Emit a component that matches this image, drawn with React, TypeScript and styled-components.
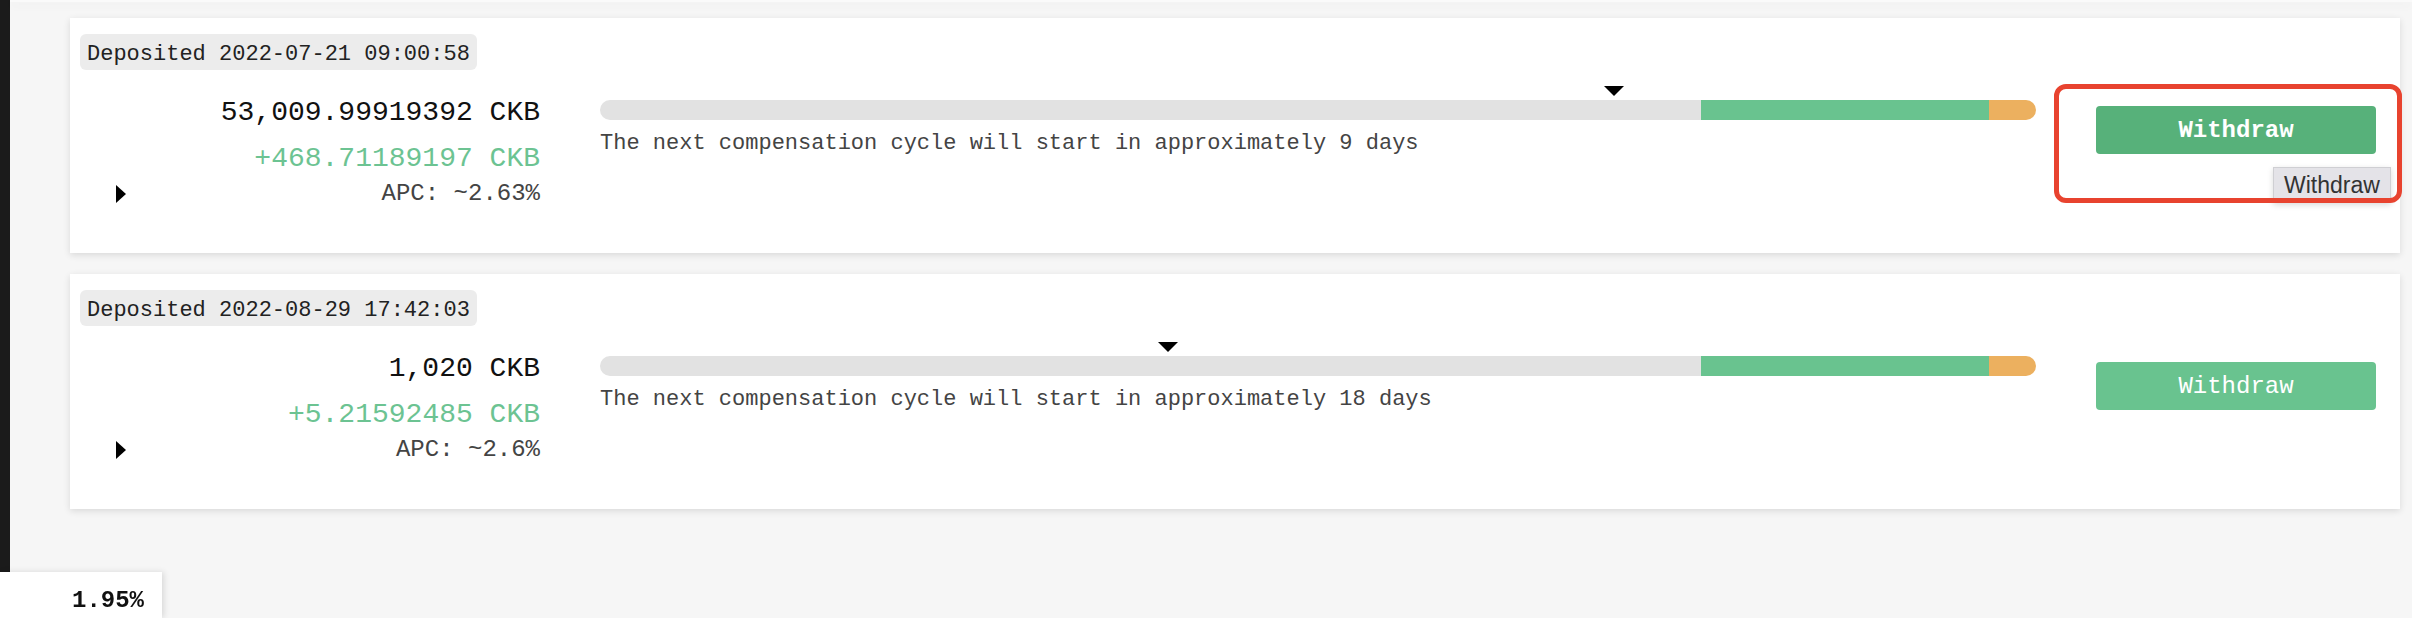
import React from 'react';
import styled, { createGlobalStyle } from 'styled-components';

const GlobalStyle = createGlobalStyle`
  html, body {
    margin: 0;
    padding: 0;
    background: #f6f6f6;
  }
  body {
    font-family: "Liberation Mono", "DejaVu Sans Mono", monospace;
  }
`;

const Page = styled.div`
  display: flex;
  height: 618px;
  overflow: hidden;
`;

const Sidebar = styled.div`
  width: 10px;
  flex-shrink: 0;
  background: #1b1b1b;
`;

const Main = styled.div`
  flex: 1;
  display: flex;
  flex-direction: column;
  gap: 21px;
  padding: 0 12px 0 60px;
  background: #f6f6f6;
`;

const PrevCardEdge = styled.div`
  height: 2px;
  margin: 0 -12px -5px -60px;
  background: #fafafa;
  box-shadow: 0 3px 10px rgba(0, 0, 0, 0.07);
`;

const Card = styled.div`
  position: relative;
  background: #fff;
  padding: 16px 24px 45px 10px;
  box-shadow: 0 2px 7px rgba(0, 0, 0, 0.12);
`;

const DateTag = styled.div`
  display: inline-block;
  height: 36px;
  padding: 0 7px;
  border-radius: 6px;
  background: #ececec;
  color: #222;
  font-size: 22px;
  line-height: 41px;
  vertical-align: top;
`;

const Row = styled.div`
  display: flex;
  align-items: flex-start;
  gap: 60px;
  margin-top: 26px;
`;

const Amounts = styled.div`
  width: 460px;
  flex-shrink: 0;
  text-align: right;
`;

const Amount = styled.div`
  font-size: 28px;
  line-height: 34px;
  color: #111;
`;

const Reward = styled.div`
  margin-top: 12px;
  font-size: 28px;
  line-height: 34px;
  color: #6cc392;
`;

const ApcRow = styled.div`
  display: flex;
  align-items: center;
  justify-content: space-between;
  margin-top: 4px;
  padding-left: 36px;
`;

const Caret = styled.span`
  width: 0;
  height: 0;
  border-top: 9.5px solid transparent;
  border-bottom: 9.5px solid transparent;
  border-left: 10px solid #000;
`;

const Apc = styled.span`
  font-size: 24px;
  line-height: 28px;
  color: #444;
`;

const Progress = styled.div`
  flex: 1;
  padding-top: 4px;
`;

const Bar = styled.div`
  position: relative;
  height: 20px;
`;

const Track = styled.div`
  display: flex;
  height: 100%;
  border-radius: 10px;
  overflow: hidden;
`;

const Segment = styled.div<{ $color: string; $grow: number }>`
  flex: ${(p) => p.$grow};
  background: ${(p) => p.$color};
`;

const Marker = styled.span`
  position: absolute;
  bottom: calc(100% + 4px);
  width: 0;
  height: 0;
  margin-left: -10px;
  border-left: 10px solid transparent;
  border-right: 10px solid transparent;
  border-top: 10px solid #000;
`;

const Hint = styled.div`
  margin-top: 11px;
  font-size: 22px;
  line-height: 26px;
  color: #444;
`;

const ButtonCell = styled.div`
  position: relative;
  width: 280px;
  flex-shrink: 0;
  margin-top: 10px;
`;

const WithdrawButton = styled.button<{ $hover?: boolean }>`
  display: block;
  width: 100%;
  height: 48px;
  padding: 0;
  border: none;
  border-radius: 4px;
  background: ${(p) => (p.$hover ? '#57b17a' : '#69c38f')};
  color: #fff;
  font-family: "Liberation Mono", "DejaVu Sans Mono", monospace;
  font-size: 24px;
  font-weight: ${(p) => (p.$hover ? 700 : 400)};
  line-height: 50px;
  cursor: pointer;
`;

const Tooltip = styled.div`
  position: absolute;
  left: 177px;
  top: 61px;
  height: 34px;
  padding: 0 10px;
  border: 1px solid #cfcfd3;
  background: #e4e3e8;
  color: #333;
  font-family: "Liberation Sans", Arial, sans-serif;
  font-size: 23px;
  line-height: 34px;
  white-space: nowrap;
  box-shadow: 0 2px 6px rgba(0, 0, 0, 0.15);
  z-index: 1;
`;

const Highlight = styled.div`
  position: absolute;
  left: -42px;
  top: -22px;
  width: 348px;
  height: 119px;
  box-sizing: border-box;
  border: 5px solid #e8432f;
  border-radius: 12px;
  z-index: 2;
  pointer-events: none;
`;

const RateBox = styled.div`
  position: fixed;
  left: 0;
  bottom: 0;
  width: 162px;
  height: 46px;
  box-sizing: border-box;
  padding: 6px 18px 0 0;
  background: #fff;
  box-shadow: 2px 0 6px rgba(0, 0, 0, 0.12);
  text-align: right;
  font-size: 24px;
  font-weight: 700;
  line-height: 46px;
  color: #111;
`;

type Deposit = {
  date: string;
  amount: string;
  reward: string;
  apc: string;
  marker: number;
  days: number;
  active?: boolean;
};

const deposits: Deposit[] = [
  {
    date: '2022-07-21 09:00:58',
    amount: '53,009.99919392 CKB',
    reward: '+468.71189197 CKB',
    apc: 'APC: ~2.63%',
    marker: 70.61,
    days: 9,
    active: true,
  },
  {
    date: '2022-08-29 17:42:03',
    amount: '1,020 CKB',
    reward: '+5.21592485 CKB',
    apc: 'APC: ~2.6%',
    marker: 39.55,
    days: 18,
  },
];

const DepositCard: React.FC<{ d: Deposit }> = ({ d }) => (
  <Card>
    <DateTag>Deposited {d.date}</DateTag>
    <Row>
      <Amounts>
        <Amount>{d.amount}</Amount>
        <Reward>{d.reward}</Reward>
        <ApcRow>
          <Caret />
          <Apc>{d.apc}</Apc>
        </ApcRow>
      </Amounts>
      <Progress>
        <Bar>
          <Track>
            <Segment $color="#e2e2e2" $grow={1101} />
            <Segment $color="#69c38f" $grow={288} />
            <Segment $color="#ecb05f" $grow={47} />
          </Track>
          <Marker style={{ left: `${d.marker}%` }} />
        </Bar>
        <Hint>The next compensation cycle will start in approximately {d.days} days</Hint>
      </Progress>
      <ButtonCell>
        <WithdrawButton $hover={d.active}>Withdraw</WithdrawButton>
        {d.active && (
          <>
            <Tooltip>Withdraw</Tooltip>
            <Highlight />
          </>
        )}
      </ButtonCell>
    </Row>
  </Card>
);

const App: React.FC = () => (
  <>
    <GlobalStyle />
    <Page>
      <Sidebar />
      <Main>
        <PrevCardEdge />
        {deposits.map((d) => (
          <DepositCard key={d.date} d={d} />
        ))}
      </Main>
    </Page>
    <RateBox>1.95%</RateBox>
  </>
);

export default App;
